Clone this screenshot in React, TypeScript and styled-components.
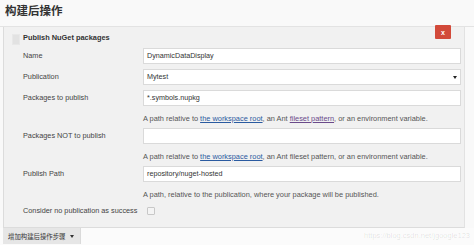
import React from 'react'
import styled, { createGlobalStyle } from 'styled-components'

const GlobalStyle = createGlobalStyle`
    html, body {
        margin: 0;
        padding: 0;
        background: #f9f9f9;
    }
    body {
        font-family: "Liberation Sans", Arial, "Noto Sans CJK SC", sans-serif;
        color: #333;
    }
`

interface IRow {
    label: string
    value?: string
    select?: boolean
}

// поля формы публикации
const fields: IRow[] = [
    { label: 'Name', value: 'DynamicDataDisplay' },
    { label: 'Publication', value: 'Mytest', select: true },
]

const App: React.FC = () => {
    return (
        <Page>
            <GlobalStyle />
            <SectionTitle>构建后操作</SectionTitle>

            <Panel>
                <PanelHeader>
                    <Handle />
                    <PanelTitle>Publish NuGet packages</PanelTitle>
                    <DeleteButton>x</DeleteButton>
                </PanelHeader>

                <Form>
                    {fields.map((f) => (
                        <React.Fragment key={f.label}>
                            <Label>{f.label}</Label>
                            {f.select ? (
                                <SelectBox>
                                    <span>{f.value}</span>
                                    <Caret />
                                </SelectBox>
                            ) : (
                                <TextBox>{f.value}</TextBox>
                            )}
                        </React.Fragment>
                    ))}

                    <Label>Packages to publish</Label>
                    <TextBox>*.symbols.nupkg</TextBox>
                    <Help>
                        A path relative to <Link>the workspace root</Link>, an Ant{' '}
                        <Link $visited>fileset pattern</Link>, or an environment variable.
                    </Help>

                    <Label>Packages NOT to publish</Label>
                    <TextBox />
                    <Help>
                        A path relative to <Link>the workspace root</Link>, an Ant fileset pattern, or an
                        environment variable.
                    </Help>

                    <Label>Publish Path</Label>
                    <TextBox>repository/nuget-hosted</TextBox>
                    <Help>A path, relative to the publication, where your package will be published.</Help>

                    <Label $wide>Consider no publication as success</Label>
                    <CheckCell>
                        <CheckBox />
                    </CheckCell>
                </Form>
            </Panel>

            <Footer>
                <AddButton>
                    增加构建后操作步骤 <SmallCaret />
                </AddButton>
                <Watermark>https://blog.csdn.net/jgoogle123</Watermark>
            </Footer>
        </Page>
    )
}

const Page = styled.div`
    width: 474px;
    height: 245px;
    overflow: hidden;
    background: #f9f9f9;
`

const SectionTitle = styled.div`
    height: 27px;
    box-sizing: border-box;
    padding: 4px 0 0 5px;
    font-size: 11.5px;
    font-weight: bold;
    line-height: 14px;
    color: #333;
    border-bottom: 1px solid #e3e3e3;
`

const Panel = styled.div`
    margin: 0 9px 0 3px;
    height: 201px;
    box-sizing: border-box;
    background: #f1f1f1;
    border-left: 1px solid #dcdcdc;
    border-right: 1px solid #e2e2e2;
    border-bottom: 1px solid #dcdcdc;
`

const PanelHeader = styled.div`
    display: flex;
    align-items: flex-start;
    height: 20px;
    padding: 0 13px 0 8px;
`

const Handle = styled.div`
    width: 6px;
    height: 9px;
    margin-top: 7px;
    background: #e2e2e2;
    border: 1px solid #e8e8e8;
`

const PanelTitle = styled.div`
    margin: 6px 0 0 3px;
    font-size: 7.4px;
    font-weight: bold;
    line-height: 9px;
    color: #333;
`

const DeleteButton = styled.div`
    margin-left: auto;
    margin-top: -2px;
    width: 16px;
    height: 14px;
    background: #d24a3a;
    color: #fff;
    font-size: 7px;
    font-weight: bold;
    display: flex;
    align-items: center;
    justify-content: center;
    border-radius: 1px;
`

const Form = styled.div`
    display: grid;
    grid-template-columns: 120px 318px;
    padding: 1px 0 0 19px;
    row-gap: 5px;
    font-size: 7.3px;
    color: #444;
`

const Label = styled.div<{ $wide?: boolean }>`
    height: 16px;
    line-height: 16px;
    white-space: nowrap;
    ${({ $wide }) => ($wide ? 'height: 14px; line-height: 14px;' : '')}
`

const TextBox = styled.div`
    height: 16px;
    box-sizing: border-box;
    background: #fff;
    border: 1px solid #dadada;
    padding-left: 3px;
    line-height: 14px;
    font-size: 7.2px;
    color: #333;
`

const SelectBox = styled(TextBox)`
    display: flex;
    align-items: center;
    justify-content: space-between;
    padding-right: 3px;
`

const Caret = styled.span`
    width: 0;
    height: 0;
    border-left: 2px solid transparent;
    border-right: 2px solid transparent;
    border-top: 3px solid #222;
`

const Help = styled.div`
    grid-column: 2;
    margin-top: -3px;
    padding-top: 5px;
    height: 10px;
    line-height: 11px;
    font-size: 7.4px;
    color: #555;
    white-space: nowrap;
`

const Link = styled.span<{ $visited?: boolean }>`
    color: ${({ $visited }) => ($visited ? '#6a4a8a' : '#2a5aa0')};
    text-decoration: underline;
`

const CheckCell = styled.div`
    height: 14px;
    display: flex;
    align-items: center;
`

const CheckBox = styled.div`
    width: 6px;
    height: 6px;
    margin-left: 4px;
    background: #f4f4f4;
    border: 1px solid #c8c8c8;
    border-radius: 1px;
`

const Footer = styled.div`
    display: flex;
    align-items: flex-start;
    height: 17px;
    padding-left: 3px;
    background: #fbfbfb;
`

const AddButton = styled.div`
    display: flex;
    align-items: center;
    gap: 4px;
    height: 16px;
    padding: 0 6px 0 5px;
    background: #e6e6e6;
    border-right: 1px solid #dadada;
    font-size: 6.4px;
    color: #333;
    white-space: nowrap;
`

const SmallCaret = styled(Caret)`
    border-top-color: #333;
`

const Watermark = styled.div`
    margin-left: auto;
    padding: 3px 4px 0 0;
    font-size: 7.5px;
    color: rgba(0, 0, 0, 0.1);
`

export default App
